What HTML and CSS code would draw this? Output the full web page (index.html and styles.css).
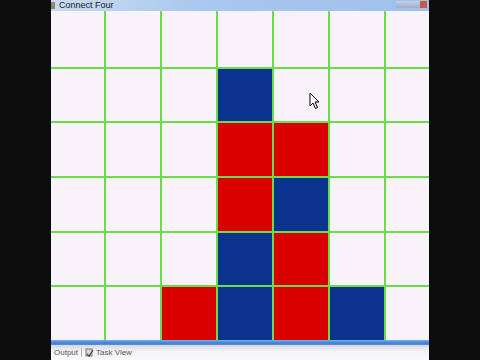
FILE: index.html
```html
<!DOCTYPE html>
<html>
<head>
<meta charset="utf-8">
<link rel="stylesheet" href="styles.css">
</head>
<body>
<div class="screen">
  <div class="side left"></div>
  <div class="window">
    <div class="titlebar">
      <span class="appicon"></span>
      <span class="title">Connect Four</span>
      <span class="spacer"></span>
      <span class="btn minmax"></span>
      <span class="btn close"></span>
    </div>
    <div class="board">
      <div class="cell"></div><div class="cell"></div><div class="cell"></div><div class="cell"></div><div class="cell"></div><div class="cell"></div><div class="cell"></div>
      <div class="cell"></div><div class="cell"></div><div class="cell"></div><div class="cell blue"></div><div class="cell"></div><div class="cell"></div><div class="cell"></div>
      <div class="cell"></div><div class="cell"></div><div class="cell"></div><div class="cell red"></div><div class="cell red"></div><div class="cell"></div><div class="cell"></div>
      <div class="cell"></div><div class="cell"></div><div class="cell"></div><div class="cell red"></div><div class="cell blue"></div><div class="cell"></div><div class="cell"></div>
      <div class="cell"></div><div class="cell"></div><div class="cell"></div><div class="cell blue"></div><div class="cell red"></div><div class="cell"></div><div class="cell"></div>
      <div class="cell"></div><div class="cell"></div><div class="cell red"></div><div class="cell blue"></div><div class="cell red"></div><div class="cell blue"></div><div class="cell"></div>
    </div>
    <div class="edge"></div>
    <div class="taskbar">
      <span class="tb-text">Output</span>
      <span class="tb-sep"></span>
      <svg class="tb-icon" width="9" height="9" viewBox="0 0 9 9"><rect x="1" y="1" width="6" height="7" fill="#d8d8d8" stroke="#777" stroke-width="1"/><path d="M2 6 L4 8 L8 2" fill="none" stroke="#444" stroke-width="1.2"/></svg>
      <span class="tb-text">Task View</span>
    </div>
    <svg class="cursor" width="12" height="18" viewBox="0 0 12 18"><path d="M1 1 L1 14 L4 11 L6.5 16.5 L8.5 15.5 L6 10 L10 10 Z" fill="#fff" stroke="#000" stroke-width="1"/></svg>
  </div>
  <div class="side right"></div>
</div>
</body>
</html>
```
FILE: styles.css
```css
html, body {
  margin: 0;
  padding: 0;
  background: #0c0c0c;
}
.screen {
  display: flex;
  width: 480px;
  height: 360px;
  overflow: hidden;
}
.side {
  background: #0c0c0c;
}
.side.left { width: 51px; }
.side.right { flex: 1; }
.window {
  position: relative;
  width: 378px;
  display: flex;
  flex-direction: column;
  background: #f7f3f8;
}
.titlebar {
  height: 11px;
  display: flex;
  align-items: center;
  background: linear-gradient(to right, #c9dcf2 0%, #a9c8ee 40%, #9fc0ec 100%);
  font-family: "Liberation Sans", Arial, sans-serif;
  font-size: 9px;
  color: #1a1a1a;
  overflow: hidden;
}
.appicon {
  width: 4px;
  height: 7px;
  background: #8a8a70;
}
.title {
  margin-left: 4px;
  line-height: 11px;
}
.spacer { flex: 1; }
.btn {
  height: 7px;
  align-self: flex-start;
  margin-top: 1px;
}
.minmax {
  width: 24px;
  background: linear-gradient(#c3d0e2, #9cb0cc);
  border-radius: 0 0 0 3px;
}
.close {
  width: 7px;
  margin-right: 2px;
  background: #c8584a;
}
.board {
  height: 329px;
  display: grid;
  grid-template-columns: 53px 54px 54px 54px 54px 54px 43px;
  grid-template-rows: 56px 52px 53px 53px 52px 53px;
  gap: 2px;
  background: #6ddc4a;
}
.cell {
  background: #f7f3f8;
}
.cell.blue { background: #0b348e; }
.cell.red { background: #d90000; }
.edge {
  height: 5px;
  background: linear-gradient(#7fb0ea, #3d7fd8 60%, #5b8fd4);
}
.taskbar {
  flex: 1;
  display: flex;
  align-items: center;
  background: linear-gradient(#d8d6de, #f4f2f6 40%, #fbfafc);
  font-family: "Liberation Sans", Arial, sans-serif;
  font-size: 8px;
  color: #55555c;
  padding-left: 3px;
}
.tb-sep {
  width: 1px;
  height: 9px;
  background: #b0b0b8;
  margin: 0 3px 0 3px;
}
.tb-icon {
  margin-right: 2px;
}
.cursor {
  position: absolute;
  left: 258px;
  top: 92px;
}
```
